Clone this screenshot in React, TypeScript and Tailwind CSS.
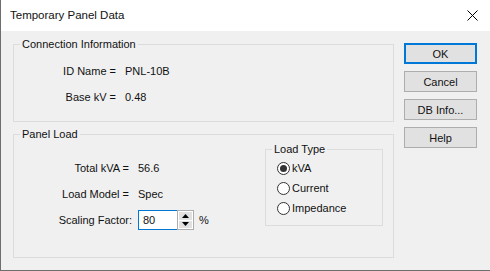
import React from "react";

const font = { fontFamily: '"Liberation Sans", Arial, sans-serif' };

function GroupBox({ title, className, children }: { title: string; className: string; children: React.ReactNode }) {
  return (
    <div className={`relative border border-[#dcdcdc] ${className}`}>
      <span className="absolute -top-[9px] left-[6px] px-[2px] bg-[#f0f0f0] leading-4">{title}</span>
      {children}
    </div>
  );
}

function Row({ label, value, w }: { label: string; value: string; w: string }) {
  return (
    <div className="flex items-center h-[26px]">
      <span className={`${w} text-right`}>{label}</span>
      <span className="ml-[9px]">{value}</span>
    </div>
  );
}

function Radio({ label, checked }: { label: string; checked?: boolean }) {
  return (
    <div className="flex items-center h-[20px]">
      <span className="w-[13px] h-[13px] rounded-full border border-[#333] bg-white flex items-center justify-center">
        {checked && <span className="w-[7px] h-[7px] rounded-full bg-[#333]" />}
      </span>
      <span className="ml-[2px]">{label}</span>
    </div>
  );
}

function Btn({ label, primary }: { label: string; primary?: boolean }) {
  return (
    <button
      className={`w-[73px] h-[21px] bg-[#e1e1e1] flex items-center justify-center leading-4 ${
        primary ? "border-2 border-[#0078d7]" : "border border-[#adadad]"
      }`}
    >
      {label}
    </button>
  );
}

export default function App() {
  return (
    <div style={font} className="w-[490px] h-[271px] flex flex-col text-[11px] text-[#111] bg-[#f0f0f0] border-l border-b border-[#6e6e6e]">
      <div className="h-[31px] bg-white flex items-center justify-between pl-[9px] pr-[11px] text-[11.5px]">
        <span>Temporary Panel Data</span>
        <svg width="11" height="11" viewBox="0 0 11 11" className="mr-[1px]">
          <path d="M0.5 0.5 L10.5 10.5 M10.5 0.5 L0.5 10.5" stroke="#000" strokeWidth="1" />
        </svg>
      </div>
      <div className="flex flex-1">
        <div className="w-[381px] ml-[12px] mt-[13px] flex flex-col gap-[12px]">
          <GroupBox title="Connection Information" className="h-[78px] pt-[13px]">
            <Row label="ID Name =" value="PNL-10B" w="w-[102px]" />
            <Row label="Base kV =" value="0.48" w="w-[102px]" />
          </GroupBox>
          <GroupBox title="Panel Load" className="h-[124px] flex">
            <div className="pt-[20px]">
              <Row label="Total kVA =" value="56.6" w="w-[115px]" />
              <Row label="Load Model =" value="Spec" w="w-[115px]" />
              <div className="flex items-center h-[26px]">
                <span className="w-[118px] text-right">Scaling Factor:</span>
                <div className="ml-[6px] flex h-[20px]">
                  <div className="w-[40px] h-[20px] border border-[#0078d7] bg-white pl-[4px] flex items-center">80</div>
                  <div className="w-[17px] h-[20px] border border-[#adadad] -ml-[1px] bg-white flex flex-col p-[1px] gap-[1px]">
                    <div className="flex-1 bg-[#e1e1e1] flex items-center justify-center">
                      <svg width="7" height="4" viewBox="0 0 7 4"><path d="M0 4 L3.5 0 L7 4 Z" fill="#000" /></svg>
                    </div>
                    <div className="flex-1 bg-[#e1e1e1] flex items-center justify-center">
                      <svg width="7" height="4" viewBox="0 0 7 4"><path d="M0 0 L3.5 4 L7 0 Z" fill="#000" /></svg>
                    </div>
                  </div>
                </div>
                <span className="ml-[5px]">%</span>
              </div>
            </div>
            <GroupBox title="Load Type" className="ml-auto mr-[10px] mt-[14px] w-[118px] h-[77px] pl-[11px] pt-[8px]">
              <Radio label="kVA" checked />
              <Radio label="Current" />
              <Radio label="Impedance" />
            </GroupBox>
          </GroupBox>
        </div>
        <div className="ml-[10px] mt-[12px] flex flex-col gap-[7px]">
          <Btn label="OK" primary />
          <Btn label="Cancel" />
          <Btn label="DB Info..." />
          <Btn label="Help" />
        </div>
      </div>
    </div>
  );
}
